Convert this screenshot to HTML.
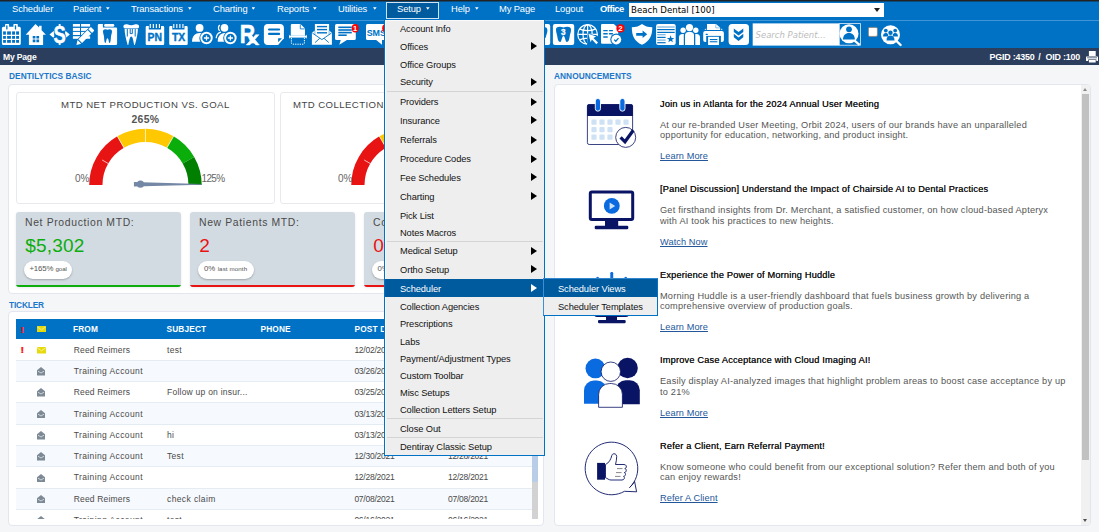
<!DOCTYPE html>
<html><head><meta charset="utf-8"><title>My Page</title>
<style>
*{box-sizing:border-box;margin:0;padding:0}
html,body{width:1099px;height:532px;overflow:hidden;background:#f5f6f8;font-family:"Liberation Sans",sans-serif;}
body{position:relative}
.a{position:absolute;white-space:nowrap}
#top{position:absolute;left:0;top:0;width:1099px;height:21px;background:#0072c6;border-top:1px solid #222;border-bottom:1px solid #3f95d6}
#top span{position:absolute;top:2px;font-size:9.4px;line-height:12px;color:#fff;white-space:nowrap;letter-spacing:-0.12px}
#top i{position:absolute;top:6.2px;width:3.6px;height:2.5px;background:#fff;clip-path:polygon(0 0,100% 0,50% 100%)}
#tb{position:absolute;left:0;top:21px;width:1099px;height:27px;background:#0072c6}
#bar{position:absolute;left:0;top:48px;width:1099px;height:17px;background:#2c3e5d;color:#fff;font-size:8.6px;font-weight:bold;letter-spacing:-0.2px}
.lbl{position:absolute;font-size:8.3px;font-weight:bold;color:#1b77c9;letter-spacing:0.05px;white-space:nowrap}
.panel{position:absolute;background:#fff;border:1px solid #e3e6ee;border-radius:4px}
.card{position:absolute;background:#fff;border:1px solid #e8e9ee;border-radius:3px}
.ct{position:absolute;font-size:9.6px;color:#444;letter-spacing:0.43px;white-space:nowrap}
.stat{position:absolute;top:212px;width:165px;height:74.8px;background:#d3dbe2;border-radius:3px;overflow:hidden;box-shadow:0 1px 3px rgba(0,0,0,.08)}
.stat b{position:absolute;left:0;bottom:0;width:100%;height:1.5px}
.stat .t{position:absolute;left:9px;top:4.5px;font-size:10.4px;color:#4a4a4a;letter-spacing:0.65px;white-space:nowrap}
.stat .v{position:absolute;left:9.2px;top:22.5px;font-size:19px;letter-spacing:0.2px;white-space:nowrap}
.stat .p{position:absolute;left:8.4px;top:49.2px;height:17.4px;background:#fff;border-radius:9px;box-shadow:0 1px 2px rgba(0,0,0,.25);font-size:7.8px;color:#555;padding:0 5px;line-height:16.5px;letter-spacing:-0.1px;white-space:nowrap}
.stat .p s{text-decoration:none;font-size:6.2px}
#tk{position:absolute;left:16px;top:319px;width:521.5px;height:199.5px;overflow:hidden}
#tk .h{position:absolute;left:0;top:0;width:100%;height:20px;background:#0072c6;color:#fff;font-weight:bold;font-size:8.3px;letter-spacing:0.15px}
#tk .r{position:absolute;left:0;width:100%;height:21.3px;border-bottom:1px solid #e4ebf3;font-size:8.5px;color:#4a4a4a;letter-spacing:0.5px}
#tk .r.o{background:#f6f9fd}
#tk span{position:absolute;top:5.2px;white-space:nowrap}
#tk .h span{top:5.2px}
.an{position:absolute;left:660px;font-size:9.2px;color:#555;letter-spacing:0.21px;line-height:10.5px;white-space:nowrap}
.an h4{position:relative;top:0.8px;font-size:9.2px;font-weight:normal;color:#181818;letter-spacing:0.2px;margin-bottom:11px;text-shadow:0.1px 0 0 #181818}
.an u{display:block;margin-top:10.6px;color:#24569a;letter-spacing:0.1px;text-decoration-thickness:0.7px;text-underline-offset:1px}
#menu{position:absolute;left:384px;top:20px;width:161px;height:435.5px;background:#eee;border:1px solid #0072c6;border-top:0;box-shadow:inset 1px 1px 0 #fafafa}
#menu span{position:absolute;left:15px;font-size:9.3px;color:#111;letter-spacing:-0.1px;white-space:nowrap;line-height:11px}
#menu i{position:absolute;left:146px;width:0;height:0;border-top:4px solid transparent;border-bottom:4px solid transparent;border-left:6.5px solid #000}
#menu hr{position:absolute;left:2px;width:156px;border:0;border-top:1px solid #d4d4d4}
#sub{position:absolute;left:543px;top:278px;width:115px;height:38px;background:#eee;border:1px solid #0072c6;border-left-color:#3a8fd6;border-top-color:#2f86cf}
#sub span{position:absolute;left:14px;font-size:9.3px;color:#111;letter-spacing:-0.1px;white-space:nowrap;line-height:11px}
</style></head><body>
<div id="top">
<div class="a" style="left:0;top:0;width:1099px;height:1px;background:rgba(29,29,31,.45)"></div>
<span style="left:12px">Scheduler</span>
<span style="left:73px">Patient</span><i style="left:106px"></i>
<span style="left:131px">Transactions</span><i style="left:188px"></i>
<span style="left:213px">Charting</span><i style="left:251.5px"></i>
<span style="left:277px">Reports</span><i style="left:313px"></i>
<span style="left:338px">Utilities</span><i style="left:373px"></i>
<div class="a" style="left:386px;top:1px;width:53px;height:17px;background:#005a9e;border:1px solid #cfe3f5"></div>
<span style="left:397px">Setup</span><i style="left:426px"></i>
<span style="left:451px">Help</span><i style="left:475px"></i>
<span style="left:499px">My Page</span>
<span style="left:555px">Logout</span>
<span style="left:600px;font-weight:bold;letter-spacing:-0.45px">Office</span>
<div class="a" style="left:629px;top:1.5px;width:255px;height:14px;background:#fff;font-family:'DejaVu Sans',sans-serif;font-size:8.6px;line-height:15px;color:#000;padding-left:2px">Beach Dental [100]<div class="a" style="right:4px;top:5.8px;width:0;height:0;border-left:3.2px solid transparent;border-right:3.2px solid transparent;border-top:4px solid #1e1e1e"></div></div>
</div>
<div id="tb"><!--ICONS--><svg class="a" style="left:0;top:0" width="1099" height="27" viewBox="0 21 1099 27"><path d="M1.9 28.3a1.5 1.5 0 0 1 1.5-1.5H5.1V24.6a.6.6 0 0 1 .6-.6H8.5a.6.6 0 0 1 .6.6V26.8H13.4V24.6a.6.6 0 0 1 .6-.6H17.2a.6.6 0 0 1 .6.6V26.8H19.3a1.5 1.5 0 0 1 1.5 1.5V43.4a1.5 1.5 0 0 1-1.5 1.5H3.4a1.5 1.5 0 0 1-1.5-1.5Z" fill="#fff"/><rect x="6.20" y="25.2" width="1.3" height="4.4" rx=".65" fill="#0072c6"/><rect x="14.85" y="25.2" width="1.3" height="4.4" rx=".65" fill="#0072c6"/><rect x="3.1" y="31.4" width="2.8" height="3.3" fill="#0072c6"/><rect x="3.1" y="36.0" width="2.8" height="2.8" fill="#0072c6"/><rect x="3.1" y="40.0" width="2.8" height="2.8" fill="#0072c6"/><rect x="7.1" y="31.4" width="3.8" height="3.3" fill="#0072c6"/><rect x="7.1" y="36.0" width="3.8" height="2.8" fill="#0072c6"/><rect x="7.1" y="40.0" width="3.8" height="2.8" fill="#0072c6"/><rect x="12.1" y="31.4" width="2.9" height="3.3" fill="#0072c6"/><rect x="12.1" y="36.0" width="2.9" height="2.8" fill="#0072c6"/><rect x="12.1" y="40.0" width="2.9" height="2.8" fill="#0072c6"/><rect x="16.1" y="31.4" width="2.9" height="3.3" fill="#0072c6"/><rect x="16.1" y="36.0" width="2.9" height="2.8" fill="#0072c6"/><rect x="16.1" y="40.0" width="2.9" height="2.8" fill="#0072c6"/><path d="M35.5 24L39.1 27.6V25.8H41.6V30.2L45.9 34.7H43.1V44.9H28.9V34.7H25.7Z" fill="#fff"/><path d="M32.7 36H35.4V38.6H32.7ZM36.4 36H39.1V38.6H36.4ZM32.7 39.6H35.4V42.3H32.7ZM36.4 39.6H39.1V42.3H36.4Z" fill="#0072c6"/><path d="M49.5 34.5L54.2 30.6V38.4ZM69.8 34.5L65.1 30.6V38.4Z" fill="#fff"/><text x="0" y="42.9" font-family="Liberation Sans,sans-serif" font-weight="bold" font-size="23.5" fill="#0072c6" stroke="#0072c6" stroke-width="2.6" text-anchor="middle" transform="translate(59.65 0) scale(.78 1)">S</text><text x="0" y="42.9" font-family="Liberation Sans,sans-serif" font-weight="bold" font-size="23.5" fill="#fff" stroke="#fff" stroke-width="0.5" text-anchor="middle" transform="translate(59.65 0) scale(.78 1)">S</text><rect x="58.7" y="24" width="1.9" height="3" fill="#fff"/><rect x="58.7" y="42" width="1.9" height="2.9" fill="#fff"/><rect x="72.9" y="24.0" width="7.1" height="2.6" fill="#fff"/><rect x="81" y="24.0" width="9.1" height="2.6" fill="#fff"/><rect x="72.9" y="27.9" width="7.1" height="3.0" fill="#fff"/><rect x="81" y="27.9" width="9.1" height="3.0" fill="#fff"/><rect x="72.9" y="31.9" width="7.1" height="3.1" fill="#fff"/><rect x="81" y="31.9" width="9.1" height="3.1" fill="#fff"/><rect x="72.9" y="36.2" width="7.1" height="2.6" fill="#fff"/><rect x="81" y="36.2" width="9.1" height="2.6" fill="#fff"/><path d="M91 24.5L76 39.5L72.5 46L94 46L95 28Z" fill="#0072c6" transform="translate(0.6 0.4)"/><path d="M86.5 36.2H90.1V38.8H84Z" fill="#fff"/><g transform="translate(76.4 44.9) rotate(-45)"><path d="M0 0L4.2 -2.6V2.6Z" fill="#fff"/><path d="M5.4 -2.6H18.4V2.6H5.4Z" fill="#fff"/><path d="M19.5 -2.6H21.9a1 1 0 0 1 1 1V1.6a1 1 0 0 1 -1 1H19.5Z" fill="#fff"/></g><path d="M97.8 25.2a1.2 1.2 0 0 1 1.2-1.2H102.9V27.6H116a1.1 1.1 0 0 1 1.1 1.1V43.7a1.2 1.2 0 0 1-1.2 1.2H99a1.2 1.2 0 0 1-1.2-1.2Z" fill="#fff"/><rect x="104.1" y="24" width="10.2" height="2.7" rx="1.3" fill="#fff"/><path d="M103 31.5C103 29 105.5 28.8 107.5 29.8C109.5 28.8 112 29 112 31.5C112 33.5 111.2 34.5 111 36.5C110.8 39 110.6 43 109.6 43C108.6 43 108.8 38.2 107.5 38.2C106.2 38.2 106.4 43 105.4 43C104.4 43 104.2 39 104 36.5C103.8 34.5 103 33.5 103 31.5Z" fill="#0072c6"/><path d="M123.4 26.3C123.4 24.3 126 23.6 128 24.6C129.7 25.3 132.7 25.3 134.5 24.6C136.5 23.6 139.1 24.3 139.1 26.3C139.1 27.6 138.6 28.2 138.1 28.2H124.4C123.9 28.2 123.4 27.6 123.4 26.3Z" fill="#fff"/><path d="M124.6 28.8H137.9C137.9 33 136.6 39 135 44.4C134.8 45.1 134.3 45.1 134.1 44.4C133.3 41 132.8 36.5 131.25 36.5C129.7 36.5 129.2 41 128.4 44.4C128.2 45.1 127.7 45.1 127.5 44.4C125.9 39 124.6 33 124.6 28.8Z" fill="#fff"/><path d="M127.3 29V36.5M135.2 29V36.5M130.2 29V33.6H132.3V29" stroke="#0072c6" stroke-width="1" fill="none"/><path d="M145.7 27.3a1.2 1.2 0 0 1 1.2-1.2H148.8V29.6H161.0V26.1H163.0a1.2 1.2 0 0 1 1.2 1.2V43.7a1.2 1.2 0 0 1-1.2 1.2H146.9a1.2 1.2 0 0 1-1.2-1.2Z" fill="#fff"/><rect x="149.70" y="24" width="1.15" height="4" fill="#fff"/><rect x="152.75" y="24" width="1.15" height="4" fill="#fff"/><rect x="155.80" y="24" width="1.15" height="4" fill="#fff"/><rect x="158.85" y="24" width="1.15" height="4" fill="#fff"/><text x="154.80" y="40.8" font-family="Liberation Sans,sans-serif" font-weight="bold" font-size="10.4" fill="#0072c6" text-anchor="middle" stroke="#0072c6" stroke-width="0.35">PN</text><path d="M169.2 27.3a1.2 1.2 0 0 1 1.2-1.2H172.3V29.6H184.5V26.1H186.5a1.2 1.2 0 0 1 1.2 1.2V43.7a1.2 1.2 0 0 1-1.2 1.2H170.4a1.2 1.2 0 0 1-1.2-1.2Z" fill="#fff"/><rect x="173.20" y="24" width="1.15" height="4" fill="#fff"/><rect x="176.25" y="24" width="1.15" height="4" fill="#fff"/><rect x="179.30" y="24" width="1.15" height="4" fill="#fff"/><rect x="182.35" y="24" width="1.15" height="4" fill="#fff"/><text x="178.60" y="40.8" font-family="Liberation Sans,sans-serif" font-weight="bold" font-size="10.4" fill="#0072c6" text-anchor="middle" stroke="#0072c6" stroke-width="0.35">TX</text><circle cx="199.6" cy="27.9" r="3.9" fill="#fff"/><path d="M192 41.8C192 36 195.3 32.9 199.8 32.9C203.4 32.9 206 34.4 207 36.5V41.8Z" fill="#fff"/><circle cx="206.5" cy="38" r="7.2" fill="#0072c6"/><circle cx="206.5" cy="38.0" r="6.2" fill="#fff"/><circle cx="206.5" cy="38.0" r="4.3" fill="#0072c6"/><path d="M203.9 38.0H209.1M206.5 35.4V40.6" stroke="#fff" stroke-width="1.3"/><circle cx="224.5" cy="27.9" r="3.8" fill="#fff"/><path d="M219.7 25A4.2 4.2 0 0 0 219.7 30.8" stroke="#fff" stroke-width="1.4" fill="none"/><path d="M217.4 41.8C217.4 36 220.5 32.9 224.7 32.9C227.8 32.9 230 34.4 231 36.5V41.8Z" fill="#fff"/><path d="M216.2 38.2C216.4 35 218.3 32.7 221 32.1" stroke="#fff" stroke-width="1.3" fill="none"/><path d="M217.2 42.1C217 37 219 34 222.5 32.9" stroke="#0072c6" stroke-width="0.9" fill="none"/><circle cx="230.4" cy="38" r="7.2" fill="#0072c6"/><circle cx="230.4" cy="38.0" r="6.2" fill="#fff"/><circle cx="230.4" cy="38.0" r="4.3" fill="#0072c6"/><path d="M227.8 38.0H233.0M230.4 35.4V40.6" stroke="#fff" stroke-width="1.3"/><text x="0" y="43.1" font-family="Liberation Sans,sans-serif" font-weight="bold" font-size="26.6" fill="#fff" stroke="#fff" stroke-width="0.5" transform="translate(239.7 0) scale(.8 1)">R</text><path d="M248.3 34.7H251.3L253.3 37.6L255.6 34.7H259L254.9 39.6L259.3 44.9H255.8L253 41.6L249.8 44.9H246.2L251.2 39.6Z" fill="#fff" stroke="#fff" stroke-width="0.5" stroke-linejoin="miter"/><path d="M263.9 28a4 4 0 0 1 4-4H279.9a4 4 0 0 1 4 4V38.3L278.1 44.9H267.9a4 4 0 0 1-4-4Z" fill="#fff"/><path d="M278.1 38.3H282L278.1 42.2Z" fill="#0072c6"/><rect x="268" y="28.6" width="12.1" height="2" rx="1" fill="#0072c6"/><rect x="268" y="32.8" width="12.1" height="2.2" rx="1" fill="#0072c6"/><path d="M290.8 25.2a1.2 1.2 0 0 1 1.2-1.2H300.5L305 28.6V35.7H290.8Z" fill="#fff"/><path d="M300.3 24.3V28.9H304.8" fill="none" stroke="#0072c6" stroke-width="0.8"/><rect x="289.4" y="35.7" width="17" height="1.9" fill="#fff"/><path d="M289 34.6L290.2 36.6L289 38.9ZM306.8 34.6L305.6 36.6L306.8 38.9Z" fill="#fff"/><path d="M291.4 38V43a1.2 1.2 0 0 0 1.2 1.2H303.2a1.2 1.2 0 0 0 1.2-1.2V38" fill="none" stroke="#fff" stroke-width="1" stroke-dasharray="1.3 1"/><path d="M311.9 32.7L314.9 30.6V24H329.1V30.6L331.9 32.7V44.7H311.9Z" fill="#fff"/><path d="M312.3 33L321.9 39.6L331.5 33M315 42.6L319.8 38.3M328.8 42.6L324 38.3" stroke="#0072c6" stroke-width="0.9" fill="none"/><path d="M314.9 30.6V35M329.1 30.6V35" stroke="#0072c6" stroke-width="0.5"/><rect x="317" y="25.9" width="10" height="1.4" fill="#0072c6"/><rect x="317" y="28.9" width="10" height="1.4" fill="#0072c6"/><rect x="317" y="32.1" width="10" height="1.4" fill="#0072c6"/><rect x="335.0" y="24" width="20.8" height="16" rx="1.5" fill="#fff"/><path d="M340.9 39.5L339.3 44.7L347.7 39.5Z" fill="#fff"/><rect x="338.3" y="26.5" width="13.5" height="1.6" fill="#0072c6"/><rect x="338.3" y="29.2" width="13.5" height="1.6" fill="#0072c6"/><rect x="338.3" y="31.8" width="13.5" height="1.6" fill="#0072c6"/><rect x="338.3" y="34.4" width="8.4" height="1.6" fill="#0072c6"/><ellipse cx="355.2" cy="28.3" rx="3.5" ry="4.2" fill="#f00"/><text x="355.1" y="31.1" font-family="Liberation Sans,sans-serif" font-weight="bold" font-size="7.6" fill="#fff" text-anchor="middle">1</text><rect x="366" y="24" width="20.8" height="16" rx="1.5" fill="#fff"/><path d="M375.6 39.5L382 44.7V39.5Z" fill="#fff"/><text x="366.7" y="35.7" font-family="Liberation Sans,sans-serif" font-weight="bold" font-size="8.9" fill="#0072c6">SMS</text><ellipse cx="386" cy="28.3" rx="3.8" ry="4.2" fill="#f00"/><rect x="540" y="24" width="10.2" height="21" rx="2" fill="#fff"/><path d="M544 27C547.5 27 548 30 547 33C546.5 35 546 36 545.5 38L544 38Z" fill="#0072c6"/><rect x="552.9" y="24" width="21.3" height="21" rx="2" fill="#fff"/><path d="M556 30C555.7 27.3 558.5 26 563.5 27.4C568.5 26 571.3 27.3 571 30C570.8 32.5 570.3 33.5 569.8 36C569.3 39 568.7 42 566.8 42C565.2 42 565.3 36 563.5 36C561.7 36 561.8 42 560.2 42C558.3 42 557.7 39 557.2 36C556.7 33.5 556.2 32.5 556 30Z" fill="#0072c6"/><text x="563.4" y="34.6" font-family="Liberation Sans,sans-serif" font-weight="bold" font-size="8.2" fill="#fff" stroke="#fff" stroke-width="0.3" text-anchor="middle">3</text><g fill="none" stroke="#fff" stroke-width="1.2"><circle cx="587.6" cy="34.4" r="9.8"/><ellipse cx="587.6" cy="34.4" rx="4.6" ry="9.8"/><path d="M587.6 24.6V44.2M577.8 34.4H597.4M579.5 28.9C584 31.3 591.2 31.3 595.7 28.9M579.5 39.9C584 37.5 591.2 37.5 595.7 39.9"/></g><path d="M587.6 33L598.6 36.5L598.6 46L587 46Z" fill="#0072c6"/><path d="M588.4 33.8L596.2 36.6L593.4 38.1L598 42.6L596.4 44.2L591.9 39.6L590.6 42.3Z" fill="#fff"/><path d="M601 25.2a1.2 1.2 0 0 1 1.2-1.2H613.8L618.2 28.1V43.7H602.2a1.2 1.2 0 0 1-1.2-1.2Z" fill="#fff"/><rect x="603.2" y="29.9" width="4.6" height="1.4" rx=".5" fill="#0072c6"/><rect x="608.9" y="29.9" width="4.1" height="1.4" rx=".5" fill="#0072c6"/><rect x="603.2" y="33.0" width="4.6" height="1.4" rx=".5" fill="#0072c6"/><rect x="608.9" y="33.0" width="4.1" height="1.4" rx=".5" fill="#0072c6"/><rect x="603.2" y="36.3" width="4.6" height="1.4" rx=".5" fill="#0072c6"/><circle cx="616.3" cy="39.6" r="6" fill="#0072c6"/><circle cx="616.3" cy="39.6" r="4.9" fill="#fff"/><path d="M614.2 39.6L615.8 41.2L618.5 38.1" fill="none" stroke="#0072c6" stroke-width="1.3"/><circle cx="620.5" cy="28.4" r="4.1" fill="#f00"/><text x="620.4" y="31.2" font-family="Liberation Sans,sans-serif" font-weight="bold" font-size="7.8" fill="#fff" text-anchor="middle">2</text><path d="M642 24C644.5 26 648 27.3 652.3 27.3C652.3 36 649.5 41.5 642 44.8C634.5 41.5 631.8 36 631.8 27.3C636 27.3 639.5 26 642 24Z" fill="#fff"/><path d="M636.2 33H642.6V30.5L647.2 34.3L642.6 38.1V35.7H636.2Z" fill="#0072c6"/><rect x="656.1" y="24" width="19.6" height="21" rx="2" fill="#fff"/><rect x="657.2" y="26.4" width="17.5" height="1.2" fill="#0072c6" opacity="0.55"/><rect x="657.2" y="29.0" width="17.5" height="1.2" fill="#0072c6" opacity="1"/><rect x="657.2" y="31.8" width="17.5" height="1.2" fill="#0072c6" opacity="1"/><rect x="657.2" y="34.1" width="8.4" height="1.2" fill="#0072c6" opacity="0.55"/><rect x="657.2" y="36.8" width="8.4" height="1.2" fill="#0072c6" opacity="1"/><rect x="657.2" y="39.5" width="8.4" height="1.2" fill="#0072c6" opacity="0.55"/><rect x="657.2" y="42.1" width="8.4" height="1.2" fill="#0072c6" opacity="1"/><path d="M670.60 35.30L671.54 37.91L674.31 37.99L672.12 39.69L672.89 42.36L670.60 40.80L668.31 42.36L669.08 39.69L666.89 37.99L669.66 37.91Z" fill="#0072c6"/><circle cx="689.5" cy="27.6" r="3.6" fill="#fff"/><circle cx="683.1" cy="30.3" r="2.7" fill="#fff"/><circle cx="695.8" cy="30.3" r="2.7" fill="#fff"/><path d="M685 45V35.4a3.5 3.5 0 0 1 3.5-3.5h2a3.5 3.5 0 0 1 3.5 3.5V45Z" fill="#fff"/><path d="M679 45V37.6a3.5 3.5 0 0 1 3.5-3.5H683.8V45ZM700 45V37.6a3.5 3.5 0 0 0-3.5-3.5H695.3V45Z" fill="#fff"/><path d="M707 24H716L720.1 27.6V30H707Z" fill="#fff"/><path d="M715.8 24.3V27.9H719.8" fill="none" stroke="#0072c6" stroke-width="0.7" opacity=".6"/><path d="M704.3 30L706.2 28.2V30ZM722.8 30L720.9 28.2V30Z" fill="#fff" opacity=".8"/><rect x="703.2" y="31.1" width="20.7" height="11" rx="2" fill="#fff"/><rect x="706.2" y="35.9" width="14.7" height="6.3" fill="#0072c6"/><rect x="708.1" y="36.8" width="10.9" height="8.2" fill="#fff"/><rect x="709.8" y="39" width="7.6" height="1.1" fill="#0072c6"/><rect x="709.8" y="41.2" width="7.6" height="1.1" fill="#0072c6"/><rect x="705.6" y="33.8" width="2.2" height="1.1" rx=".5" fill="#0072c6"/><rect x="728.6" y="24" width="20.4" height="21" rx="3.5" fill="#fff"/><path d="M733.8 28.4L738.55 32.0L743.3 28.4V31.9L738.55 35.6L733.8 31.9Z" fill="#0072c6"/><path d="M733.8 33.8L738.55 37.4L743.3 33.8V37.3L738.55 41.0L733.8 37.3Z" fill="#0072c6"/><rect x="752.7" y="23.4" width="86.6" height="22.2" fill="#fff"/><text x="755.5" y="38.3" font-family="DejaVu Sans,sans-serif" font-style="italic" font-size="8.5" fill="#bcbcbc">Search Patient...</text><rect x="839.3" y="23.6" width="21.2" height="21.6" fill="#0072c6" stroke="#e8f1fa" stroke-width="0.8"/><path d="M854.5 40.7L859.6 44.9" stroke="#fff" stroke-width="2.2"/><circle cx="849" cy="33.7" r="9.5" fill="#fff"/><circle cx="849" cy="29.3" r="2.9" fill="#0072c6"/><path d="M843 39.5C843 35.5 845.5 33.1 849 33.1C852.5 33.1 854.8 35.5 854.8 39.5Z" fill="#0072c6"/><rect x="868.4" y="27.4" width="9" height="9" rx="1.3" fill="#fff" stroke="#8d7f74" stroke-width="0.8"/><path d="M896.5 41L900.6 45" stroke="#fff" stroke-width="2.4" stroke-linecap="round"/><circle cx="890.5" cy="34.7" r="9.5" fill="#fff"/><circle cx="885.8" cy="30.6" r="1.9" fill="#0072c6"/><circle cx="895.2" cy="30.6" r="1.9" fill="#0072c6"/><circle cx="890.5" cy="32.8" r="2.2" fill="#0072c6"/><path d="M883 36.5C883 34 884.2 32.9 885.8 32.9C887 32.9 887.8 33.5 888.2 34.5L888 36.5ZM898 36.5C898 34 896.8 32.9 895.2 32.9C894 32.9 893.2 33.5 892.8 34.5L893 36.5Z" fill="#0072c6"/><path d="M886.5 40.4C886.5 37 888 35.4 890.5 35.4C893 35.4 894.5 37 894.5 40.4Z" fill="#0072c6"/></svg><!--/ICONS--></div>
<div id="bar"><span class="a" style="left:3px;top:4px">My Page</span><span class="a" style="left:989.6px;top:3.6px;font-size:8.9px">PGID :4350</span><span class="a" style="left:1038.3px;top:3.6px;font-size:8.9px">/</span><span class="a" style="left:1045.6px;top:3.6px;font-size:8.9px">OID :100</span><svg class="a" style="left:1085px;top:2px" width="14" height="13" viewBox="1085 50 14 13"><rect x="1088.9" y="51" width="6.8" height="5" fill="#fff"/><rect x="1086" y="56.4" width="12" height="4.7" rx=".6" fill="#fff"/><rect x="1087" y="57.5" width="10" height=".7" fill="#2c3e5d"/><rect x="1088.2" y="59.4" width="8.2" height="2" fill="#2c3e5d"/><rect x="1088.9" y="60" width="6.8" height="2.5" fill="#fff"/></svg></div>

<!-- DENTILYTICS -->
<div class="lbl" style="left:9px;top:71.4px">DENTILYTICS BASIC</div>
<div class="panel" style="left:8px;top:84px;width:536px;height:210px"></div>
<div class="card" style="left:16px;top:92px;width:259px;height:112px"></div>
<div class="card" style="left:280px;top:92px;width:259px;height:112px"></div>
<div class="ct" style="left:61px;top:99.4px">MTD NET PRODUCTION VS. GOAL</div>
<div class="ct" style="left:293px;top:99.4px">MTD COLLECTIONS VS. GOAL</div>
<div class="ct" style="left:131.5px;top:113.6px;font-weight:bold;letter-spacing:0.3px;font-size:10.4px;color:#555">265%</div>
<!--GAUGES--><svg class="a" style="left:0;top:0" width="384" height="200" viewBox="0 0 384 200"><path d="M89.20 185.00A56.25 56.25 0 0 1 117.33 136.29L123.95 147.76A43.00 43.00 0 0 0 102.45 185.00Z" fill="#e81313"/><path d="M117.33 136.29A56.25 56.25 0 0 1 173.57 136.29L166.95 147.76A43.00 43.00 0 0 0 123.95 147.76Z" fill="#ffc800"/><path d="M173.57 136.29A56.25 56.25 0 0 1 194.16 156.88L182.69 163.50A43.00 43.00 0 0 0 166.95 147.76Z" fill="#0aad0a"/><path d="M194.16 156.88A56.25 56.25 0 0 1 201.70 185.00L188.45 185.00A43.00 43.00 0 0 0 182.69 163.50Z" fill="#007f00"/><path d="M124.20 148.19L117.08 135.85" stroke="#fff" stroke-width="0.7"/><path d="M145.45 142.50L145.45 128.25" stroke="#fff" stroke-width="0.7"/><path d="M166.70 148.19L173.82 135.85" stroke="#fff" stroke-width="0.7"/><path d="M108.21 163.50L102.15 160.00" stroke="#fff" stroke-width="0.7"/><path d="M133.95 182.00L201.70 184.00L201.70 184.80L133.95 186.60Z" fill="#7487a5"/><circle cx="140.45" cy="184.20" r="3.6" fill="#7487a5"/><path d="M351.25 185.00A56.25 56.25 0 0 1 379.38 136.29L386.00 147.76A43.00 43.00 0 0 0 364.50 185.00Z" fill="#e81313"/><path d="M379.38 136.29A56.25 56.25 0 0 1 435.62 136.29L429.00 147.76A43.00 43.00 0 0 0 386.00 147.76Z" fill="#ffc800"/><path d="M435.62 136.29A56.25 56.25 0 0 1 456.21 156.88L444.74 163.50A43.00 43.00 0 0 0 429.00 147.76Z" fill="#0aad0a"/><path d="M456.21 156.88A56.25 56.25 0 0 1 463.75 185.00L450.50 185.00A43.00 43.00 0 0 0 444.74 163.50Z" fill="#007f00"/><path d="M386.25 148.19L379.12 135.85" stroke="#fff" stroke-width="0.7"/><path d="M407.50 142.50L407.50 128.25" stroke="#fff" stroke-width="0.7"/><path d="M428.75 148.19L435.88 135.85" stroke="#fff" stroke-width="0.7"/><path d="M370.26 163.50L364.20 160.00" stroke="#fff" stroke-width="0.7"/></svg><!--/GAUGES-->
<div class="ct" style="left:75px;top:173px;letter-spacing:0;color:#666;font-size:10px">0%</div>
<div class="ct" style="left:201.5px;top:173px;letter-spacing:-0.65px;color:#666;font-size:10px">125%</div>
<div class="ct" style="left:338px;top:173px;letter-spacing:0;color:#666;font-size:10px">0%</div>

<div class="stat" style="left:16px"><div class="t">Net Production MTD:</div><div class="v" style="color:#0cad0c">$5,302</div><div class="p">+165% <s>goal</s></div><b style="background:#0cad0c"></b></div>
<div class="stat" style="left:190px"><div class="t">New Patients MTD:</div><div class="v" style="color:#e81313">2</div><div class="p" style="padding:0 6.5px 0 5.5px;letter-spacing:0.1px">0% <s>last month</s></div><b style="background:#e81313"></b></div>
<div class="stat" style="left:364px"><div class="t">Collections MTD:</div><div class="v" style="color:#e81313">0</div><div class="p">0% <s>goal</s></div><b style="background:#e81313"></b></div>

<!-- TICKLER -->
<div class="lbl" style="left:9px;top:300.2px;letter-spacing:-0.15px">TICKLER</div>
<div class="panel" style="left:8px;top:311px;width:536px;height:215px"></div>
<div id="tk">
<div class="h"><span style="left:4.6px;color:#ff1a1a;font-size:9.5px;top:4.6px;text-shadow:0.4px 0 0 #ff1a1a">!</span><svg class="a" style="left:20.5px;top:6.8px" width="9" height="6.5" viewBox="0 0 9 6.5"><rect width="9" height="6.5" rx="0.5" fill="#e6da0c"/><path d="M0.3 0.8L4.5 3.8L8.7 0.8" fill="none" stroke="#f7f0a0" stroke-width="0.8"/></svg><span style="left:57px">FROM</span><span style="left:150.5px">SUBJECT</span><span style="left:244.5px">PHONE</span><span style="left:338.5px">POST DATE</span><span style="left:432px">DUE DATE</span></div>
<div class="r" style="top:20.50px"><span style="left:4.6px;color:#ff1a1a;font-weight:bold;font-size:9.5px;top:4.6px;text-shadow:0.4px 0 0 #ff1a1a">!</span><svg class="a" style="left:20.5px;top:7.8px" width="9" height="6.5" viewBox="0 0 9 6.5"><rect width="9" height="6.5" rx="0.5" fill="#e6da0c"/><path d="M0.3 0.8L4.5 3.8L8.7 0.8" fill="none" stroke="#fff8b0" stroke-width="0.8"/></svg><span style="left:57.7px;letter-spacing:0.17px">Reed Reimers</span><span style="left:151px;letter-spacing:0.3px">test</span><span style="left:338.4px;letter-spacing:-0.25px">12/02/2021</span><span style="left:432px;letter-spacing:-0.25px">12/02/2021</span></div>
<div class="r o" style="top:41.80px"><svg class="a" style="left:21px;top:6.4px" width="8" height="8.5" viewBox="0 0 8 8.5"><path d="M0 3.2L4 0L8 3.2V8.5H0Z" fill="#7d8a96"/><path d="M1 4.2L4 6L7 4.2" fill="none" stroke="#dfe5ea" stroke-width="0.8"/></svg><span style="left:57.7px;letter-spacing:0.39px">Training Account</span><span style="left:338.4px;letter-spacing:-0.25px">03/26/2021</span><span style="left:432px;letter-spacing:-0.25px">03/26/2021</span></div>
<div class="r" style="top:63.10px"><svg class="a" style="left:21px;top:6.4px" width="8" height="8.5" viewBox="0 0 8 8.5"><path d="M0 3.2L4 0L8 3.2V8.5H0Z" fill="#7d8a96"/><path d="M1 4.2L4 6L7 4.2" fill="none" stroke="#dfe5ea" stroke-width="0.8"/></svg><span style="left:57.7px;letter-spacing:0.17px">Reed Reimers</span><span style="left:151px;letter-spacing:0.24px">Follow up on insur...</span><span style="left:338.4px;letter-spacing:-0.25px">03/25/2021</span><span style="left:432px;letter-spacing:-0.25px">03/25/2021</span></div>
<div class="r o" style="top:84.40px"><svg class="a" style="left:21px;top:6.4px" width="8" height="8.5" viewBox="0 0 8 8.5"><path d="M0 3.2L4 0L8 3.2V8.5H0Z" fill="#7d8a96"/><path d="M1 4.2L4 6L7 4.2" fill="none" stroke="#dfe5ea" stroke-width="0.8"/></svg><span style="left:57.7px;letter-spacing:0.39px">Training Account</span><span style="left:338.4px;letter-spacing:-0.25px">03/13/2021</span><span style="left:432px;letter-spacing:-0.25px">03/13/2021</span></div>
<div class="r" style="top:105.70px"><svg class="a" style="left:21px;top:6.4px" width="8" height="8.5" viewBox="0 0 8 8.5"><path d="M0 3.2L4 0L8 3.2V8.5H0Z" fill="#7d8a96"/><path d="M1 4.2L4 6L7 4.2" fill="none" stroke="#dfe5ea" stroke-width="0.8"/></svg><span style="left:57.7px;letter-spacing:0.39px">Training Account</span><span style="left:151px;letter-spacing:0.3px">hi</span><span style="left:338.4px;letter-spacing:-0.25px">03/13/2021</span><span style="left:432px;letter-spacing:-0.25px">03/13/2021</span></div>
<div class="r o" style="top:127.00px"><svg class="a" style="left:21px;top:6.4px" width="8" height="8.5" viewBox="0 0 8 8.5"><path d="M0 3.2L4 0L8 3.2V8.5H0Z" fill="#7d8a96"/><path d="M1 4.2L4 6L7 4.2" fill="none" stroke="#dfe5ea" stroke-width="0.8"/></svg><span style="left:57.7px;letter-spacing:0.39px">Training Account</span><span style="left:151px;letter-spacing:0.3px">Test</span><span style="left:338.4px;letter-spacing:-0.25px">12/30/2021</span><span style="left:432px;letter-spacing:-0.25px">12/28/2021</span></div>
<div class="r" style="top:148.30px"><svg class="a" style="left:21px;top:6.4px" width="8" height="8.5" viewBox="0 0 8 8.5"><path d="M0 3.2L4 0L8 3.2V8.5H0Z" fill="#7d8a96"/><path d="M1 4.2L4 6L7 4.2" fill="none" stroke="#dfe5ea" stroke-width="0.8"/></svg><span style="left:57.7px;letter-spacing:0.39px">Training Account</span><span style="left:338.4px;letter-spacing:-0.25px">12/28/2021</span><span style="left:432px;letter-spacing:-0.25px">12/28/2021</span></div>
<div class="r o" style="top:169.60px"><svg class="a" style="left:21px;top:6.4px" width="8" height="8.5" viewBox="0 0 8 8.5"><path d="M0 3.2L4 0L8 3.2V8.5H0Z" fill="#7d8a96"/><path d="M1 4.2L4 6L7 4.2" fill="none" stroke="#dfe5ea" stroke-width="0.8"/></svg><span style="left:57.7px;letter-spacing:0.17px">Reed Reimers</span><span style="left:151px;letter-spacing:0.39px">check claim</span><span style="left:338.4px;letter-spacing:-0.25px">07/08/2021</span><span style="left:432px;letter-spacing:-0.25px">07/08/2021</span></div>
<div class="r" style="top:190.90px"><svg class="a" style="left:21px;top:6.4px" width="8" height="8.5" viewBox="0 0 8 8.5"><path d="M0 3.2L4 0L8 3.2V8.5H0Z" fill="#7d8a96"/><path d="M1 4.2L4 6L7 4.2" fill="none" stroke="#dfe5ea" stroke-width="0.8"/></svg><span style="left:57.7px;letter-spacing:0.39px">Training Account</span><span style="left:151px;letter-spacing:0.3px">test</span><span style="left:338.4px;letter-spacing:-0.25px">06/16/2021</span><span style="left:432px;letter-spacing:-0.25px">06/16/2021</span></div>
<div class="a" style="left:516px;top:20px;width:5.5px;height:179.5px;background:#d2d2d2"></div><div class="a" style="left:516px;top:20px;width:5.5px;height:143px;background:#b9cde8"></div>
</div>

<!-- ANNOUNCEMENTS -->
<div class="lbl" style="left:554px;top:71.4px">ANNOUNCEMENTS</div>
<div class="panel" style="left:554px;top:84px;width:537px;height:442px"></div>
<div class="an" style="top:98px"><h4>Join us in Atlanta for the 2024 Annual User Meeting</h4>At our re-branded User Meeting, Orbit 2024, users of our brands have an unparalleled<br>opportunity for education, networking, and product insight.<u>Learn More</u></div>
<div class="an" style="top:183.5px"><h4>[Panel Discussion] Understand the Impact of Chairside AI to Dental Practices</h4>Get firsthand insights from Dr. Merchant, a satisfied customer, on how cloud-based Apteryx<br>with AI took his practices to new heights.<u>Watch Now</u></div>
<div class="an" style="top:269px"><h4>Experience the Power of Morning Huddle</h4>Morning Huddle is a user-friendly dashboard that fuels business growth by delivering a<br>comprehensive overview of production goals.<u>Learn More</u></div>
<div class="an" style="top:354.5px"><h4>Improve Case Acceptance with Cloud Imaging AI!</h4>Easily display AI-analyzed images that highlight problem areas to boost case acceptance by up<br>to 21%<u>Learn More</u></div>
<div class="an" style="top:440px"><h4>Refer a Client, Earn Referral Payment!</h4>Know someone who could benefit from our exceptional solution? Refer them and both of you<br>can enjoy rewards!<u>Refer A Client</u></div>
<!--ANICONS--><svg class="a" style="left:575px;top:90px" width="80" height="420" viewBox="575 90 80 420"><rect x="587.4" y="104.5" width="45.2" height="40" rx="1.8" fill="#fff" stroke="#0a1464" stroke-width="0.8"/><path d="M587.1 116V106a1.8 1.8 0 0 1 1.8-1.8h42.2a1.8 1.8 0 0 1 1.8 1.8V116Z" fill="#0a1464"/><rect x="595.3" y="98.4" width="5.2" height="12.8" rx="2.6" fill="#0a6ae0" stroke="#fff" stroke-width="0.9"/><rect x="619.8" y="98.4" width="5.2" height="12.8" rx="2.6" fill="#0a6ae0" stroke="#fff" stroke-width="0.9"/><rect x="591.4" y="119.6" width="5.2" height="5.2" rx="0.8" fill="#cfe2f5"/><rect x="599.4" y="119.6" width="5.2" height="5.2" rx="0.8" fill="#cfe2f5"/><rect x="607.4" y="119.6" width="5.2" height="5.2" rx="0.8" fill="#cfe2f5"/><rect x="615.4" y="119.6" width="5.2" height="5.2" rx="0.8" fill="#cfe2f5"/><rect x="623.4" y="119.6" width="5.2" height="5.2" rx="0.8" fill="#cfe2f5"/><rect x="591.4" y="127.1" width="5.2" height="5.2" rx="0.8" fill="#cfe2f5"/><rect x="599.4" y="127.1" width="5.2" height="5.2" rx="0.8" fill="#cfe2f5"/><rect x="607.4" y="127.1" width="5.2" height="5.2" rx="0.8" fill="#cfe2f5"/><rect x="591.4" y="134.6" width="5.2" height="5.2" rx="0.8" fill="#cfe2f5"/><rect x="599.4" y="134.6" width="5.2" height="5.2" rx="0.8" fill="#cfe2f5"/><rect x="607.4" y="134.6" width="5.2" height="5.2" rx="0.8" fill="#cfe2f5"/><circle cx="625.7" cy="137.4" r="10" fill="#fff" stroke="#0a1464" stroke-width="0.8"/><path d="M620.6 137.3L625 141.8L633.3 130.2" fill="none" stroke="#0a1464" stroke-width="3.2" stroke-linejoin="miter"/><rect x="590.3" y="192" width="42.4" height="27.5" rx="1.5" fill="#fff" stroke="#0a1464" stroke-width="3"/><rect x="605" y="220.5" width="13.2" height="6" fill="#0a1464"/><rect x="594.7" y="225.7" width="33.6" height="3.5" rx="1.2" fill="#0a1464"/><circle cx="611.8" cy="205.9" r="7.9" fill="#0a6ae0"/><path d="M609.6 202.5L615.2 206L609.6 209.5Z" fill="#cfe2f5"/><rect x="610.3" y="272" width="2.9" height="9" rx="1.2" fill="#0a6ae0"/><circle cx="597.6" cy="278.3" r="1.5" fill="#0a6ae0"/><circle cx="625.7" cy="278.3" r="1.5" fill="#0a6ae0"/><rect x="595.5" y="284" width="32" height="31.6" rx="1.5" fill="#fff" stroke="#0a1464" stroke-width="3"/><rect x="606" y="316" width="11" height="5" fill="#0a1464"/><rect x="598" y="319.9" width="27.7" height="3.3" rx="1.2" fill="#0a1464"/><circle cx="595.4" cy="368.4" r="9.9" fill="#0a6ae0"/><path d="M584 403.8V390.5a10 10 0 0 1 10-10h3a10 10 0 0 1 10 10V403.8Z" fill="#0a6ae0"/><circle cx="627.6" cy="368" r="10.2" fill="#0a1464"/><path d="M615.8 404.2V390.3a10 10 0 0 1 10-10h4a10 10 0 0 1 10 10V404.2Z" fill="#0a1464"/><circle cx="610.8" cy="371.7" r="9.7" fill="#fff" stroke="#0a1464" stroke-width="0.8"/><path d="M598.6 407.3V394.5a11 11 0 0 1 11-11h1.8a11 11 0 0 1 11 11V407.3Z" fill="#fff" stroke="#0a1464" stroke-width="0.8"/><path d="M629.5 487.6A26.3 26.3 0 1 0 624.5 491.3L636.6 491.8L634.6 481.5" fill="#fff" stroke="#0a1464" stroke-width="0.9" stroke-linejoin="round"/><path d="M634.6 481.5A26.3 26.3 0 0 1 629.5 487.6" fill="none" stroke="#0a1464" stroke-width="0.9"/><rect x="597.1" y="462.9" width="7.9" height="16.8" fill="#0a1464"/><path d="M605.5 464.5C609 463 611 459 611.8 455.5C612.3 453 616.6 453 616.7 456.5C616.8 459.5 616 462 615.5 464.5H624C627 464.5 627 468.3 624.8 468.6C627 469 626.6 472.4 624.3 472.6C626.2 473 625.8 476.2 623.6 476.4C625 477 624.6 480 622 480H611C608.5 480 607.5 478.3 605.5 477.8Z" fill="#fff" stroke="#0a1464" stroke-width="0.9" stroke-linejoin="round"/><path d="M617.0 468.6H622.5" stroke="#555" stroke-width="0.7"/><path d="M616.0 472.6H621.5" stroke="#555" stroke-width="0.7"/><path d="M615.0 476.4H620.5" stroke="#555" stroke-width="0.7"/></svg><!--/ANICONS-->
<!-- scrollbar -->
<div class="a" style="left:1081px;top:85px;width:9px;height:440px;background:#f1f1f1;border-radius:0 3px 3px 0"></div>
<div class="a" style="left:1082px;top:94px;width:7px;height:366px;background:#c1c1c1"></div>
<div class="a" style="left:1083px;top:88px;width:0;height:0;border-left:2.5px solid transparent;border-right:2.5px solid transparent;border-bottom:3px solid #8a8a8a"></div>
<div class="a" style="left:1083px;top:519px;width:0;height:0;border-left:2.5px solid transparent;border-right:2.5px solid transparent;border-top:3px solid #505050"></div>

<!-- MENU -->
<div id="menu">
<span style="top:4.4px">Account Info</span>
<span style="top:21.5px">Offices</span><i style="top:21.9px"></i>
<span style="top:40.1px">Office Groups</span>
<span style="top:57.1px">Security</span><i style="top:57.5px"></i>
<hr style="top:71.0px">
<span style="top:77.4px">Providers</span><i style="top:77.8px"></i>
<span style="top:96.0px">Insurance</span><i style="top:96.4px"></i>
<span style="top:115.2px">Referrals</span><i style="top:115.6px"></i>
<span style="top:134.2px">Procedure Codes</span><i style="top:134.6px"></i>
<span style="top:153.0px">Fee Schedules</span><i style="top:153.4px"></i>
<span style="top:172.0px">Charting</span><i style="top:172.4px"></i>
<span style="top:190.6px">Pick List</span>
<span style="top:207.7px">Notes Macros</span>
<hr style="top:220.6px">
<span style="top:226.4px">Medical Setup</span><i style="top:226.8px"></i>
<span style="top:245.0px">Ortho Setup</span><i style="top:245.4px"></i>
<div class="a" style="left:0px;top:259px;width:160px;height:18px;background:#005a9e"></div>
<span style="top:263.6px;color:#fff">Scheduler</span><i style="top:264.0px;border-left-color:#fff"></i>
<span style="top:282.2px">Collection Agencies</span>
<span style="top:299.2px">Prescriptions</span>
<span style="top:316.6px">Labs</span>
<span style="top:333.7px">Payment/Adjustment Types</span>
<span style="top:350.8px">Custom Toolbar</span>
<span style="top:367.9px">Misc Setups</span>
<span style="top:385.4px">Collection Letters Setup</span>
<hr style="top:397.9px">
<span style="top:403.8px">Close Out</span>
<hr style="top:416.5px">
<span style="top:422.1px">Dentiray Classic Setup</span>
</div>
<div id="sub"><div class="a" style="left:0;top:0;width:113px;height:18px;background:#005a9e"></div><span style="top:5.2px;color:#fff">Scheduler Views</span><span style="top:22.7px">Scheduler Templates</span></div>
</body></html>
